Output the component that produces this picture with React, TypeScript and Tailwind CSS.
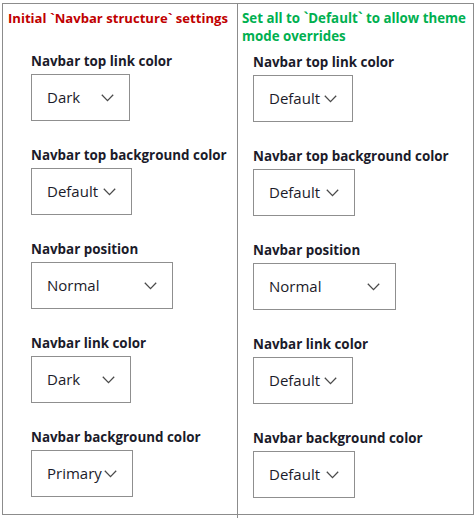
import React from "react";

const Chevron = () => (
  <svg width="13" height="8" viewBox="0 0 13 8" fill="none" className="shrink-0">
    <path d="M0.8 0.8 L6.5 6.6 L12.2 0.8" stroke="#4a4a4a" strokeWidth="1.3" />
  </svg>
);

type Field = { label: string; value: string; w: number };

const Select = ({ value, w }: { value: string; w: number }) => (
  <div
    className="flex h-[47px] items-center border border-[#8f8f8f] bg-white pl-[15px] pr-[15px]"
    style={{ width: w }}
  >
    <span className="flex-1 whitespace-nowrap text-[15px] text-[#1b1b2a]">{value}</span>
    <Chevron />
  </div>
);

const Group = ({ f }: { f: Field }) => (
  <div className="mb-[25px]">
    <div className="h-[18px] whitespace-nowrap text-[13.4px] font-bold leading-[18px] text-[#1b1b2a]">
      {f.label}
    </div>
    <div className="mt-[4px]">
      <Select value={f.value} w={f.w} />
    </div>
  </div>
);

const left: Field[] = [
  { label: "Navbar top link color", value: "Dark", w: 99 },
  { label: "Navbar top background color", value: "Default", w: 101 },
  { label: "Navbar position", value: "Normal", w: 142 },
  { label: "Navbar link color", value: "Dark", w: 100 },
  { label: "Navbar background color", value: "Primary", w: 102 },
];

const right: Field[] = [
  { label: "Navbar top link color", value: "Default", w: 100 },
  { label: "Navbar top background color", value: "Default", w: 102 },
  { label: "Navbar position", value: "Normal", w: 143 },
  { label: "Navbar link color", value: "Default", w: 100 },
  { label: "Navbar background color", value: "Default", w: 102 },
];

export default function App() {
  return (
    <div
      className="h-[518px] w-[476px] bg-white pl-[2px] pt-[3px]"
      style={{ fontFamily: '"Open Sans", "Noto Sans", sans-serif' }}
    >
      <div className="grid h-[512px] w-[472px] grid-cols-[235px_1fr] border border-[#8c8c8c]">
        <div className="border-r border-[#8c8c8c]">
          <div className="whitespace-nowrap pl-[5px] pt-[5px] text-[13.1px] font-bold leading-[18px] text-[#c00000]">
            Initial `Navbar structure` settings
          </div>
          <div className="pl-[28px] pt-[25px]">
            {left.map((f, i) => (
              <Group key={i} f={f} />
            ))}
          </div>
        </div>
        <div>
          <div className="whitespace-nowrap pl-[4px] pt-[5px] text-[13.3px] font-bold leading-[18px] text-[#00b050]">
            Set all to `Default` to allow theme
            <br />
            mode overrides
          </div>
          <div className="pl-[15px] pt-[8px]">
            {right.map((f, i) => (
              <Group key={i} f={f} />
            ))}
          </div>
        </div>
      </div>
    </div>
  );
}
